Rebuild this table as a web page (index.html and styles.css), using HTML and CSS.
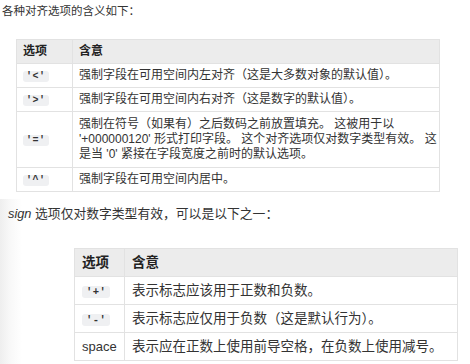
FILE: index.html
```html
<!DOCTYPE html>
<html lang="zh">
<head>
<meta charset="utf-8">
<link rel="stylesheet" href="styles.css">
</head>
<body>
<p class="intro">各种对齐选项的含义如下：</p>
<table class="opts opts-align">
  <thead>
    <tr><th class="c1">选项</th><th>含意</th></tr>
  </thead>
  <tbody>
    <tr><td class="c1"><code>'&lt;'</code></td><td>强制字段在可用空间内左对齐（这是大多数对象的默认值）。</td></tr>
    <tr><td class="c1"><code>'&gt;'</code></td><td>强制字段在可用空间内右对齐（这是数字的默认值）。</td></tr>
    <tr class="tall"><td class="c1"><code>'='</code></td><td>强制在符号（如果有）之后数码之前放置填充。 这被用于以<br>'+000000120' 形式打印字段。 这个对齐选项仅对数字类型有效。 这<br>是当 '0' 紧接在字段宽度之前时的默认选项。</td></tr>
    <tr><td class="c1"><code>'^'</code></td><td>强制字段在可用空间内居中。</td></tr>
  </tbody>
</table>
<section class="lower">
  <p class="sign-line"><em>sign</em> 选项仅对数字类型有效，可以是以下之一：</p>
  <table class="opts opts-sign">
    <thead>
      <tr><th class="c1">选项</th><th>含意</th></tr>
    </thead>
    <tbody>
      <tr><td class="c1"><code>'+'</code></td><td>表示标志应该用于正数和负数。</td></tr>
      <tr><td class="c1"><code>'-'</code></td><td>表示标志应仅用于负数（这是默认行为）。</td></tr>
      <tr><td class="c1">space</td><td>表示应在正数上使用前导空格，在负数上使用减号。</td></tr>
    </tbody>
  </table>
</section>
</body>
</html>
```
FILE: styles.css
```css
html, body {
  margin: 0;
  padding: 0;
  background: #fff;
}
body {
  font-family: "Liberation Sans", "Noto Sans CJK SC", sans-serif;
  color: #333;
  width: 470px;
  height: 364px;
  overflow: hidden;
}
.intro {
  margin: 0;
  padding: 4px 0 0 2px;
  font-size: 11.5px;
  line-height: 15px;
}
.opts {
  border-collapse: collapse;
  border: 1px solid #e2e2e2;
  table-layout: fixed;
}
.opts th,
.opts td {
  border: 1px solid #e2e2e2;
  text-align: left;
  vertical-align: middle;
  white-space: nowrap;
}
.opts th {
  background: #ececec;
  font-weight: bold;
  color: #222;
}
.opts code {
  display: inline-block;
  font-family: "Liberation Mono", "DejaVu Sans Mono", monospace;
  font-weight: bold;
  background: #eff0f2;
  border-radius: 3px;
  color: #333;
}
.opts-align {
  margin: 20px 0 0 16px;
  width: 424px;
  font-size: 12px;
  line-height: 15px;
}
.opts-align th,
.opts-align td {
  padding: 4px 6px;
}
.opts-align .c1 {
  width: 43px;
}
.opts-align tr.tall td {
  padding-top: 5px;
  padding-bottom: 5px;
}
.opts-align code {
  font-size: 10px;
  line-height: 11px;
  padding: 0 3px;
  letter-spacing: 0.5px;
}
.lower {
  margin-top: 7px;
  padding-top: 6px;
  height: 164px;
  background: linear-gradient(to right, #eeeeee 0, #f8f8f8 10px, #ffffff 22px);
}
.sign-line {
  margin: 0;
  padding-left: 8px;
  font-size: 12.8px;
  line-height: 18px;
}
.sign-line em {
  font-style: italic;
}
.opts-sign {
  margin: 25px 0 0 74px;
  width: 384px;
  font-size: 13.5px;
  line-height: 17px;
  background: #fff;
}
.opts-sign th,
.opts-sign td {
  padding: 5px 7px;
}
.opts-sign .c1 {
  width: 35px;
}
.opts-sign td.c1 {
  font-size: 13px;
}
.opts-sign code {
  font-size: 10.5px;
  line-height: 12px;
  padding: 0 4px;
  letter-spacing: 0.5px;
}
```
